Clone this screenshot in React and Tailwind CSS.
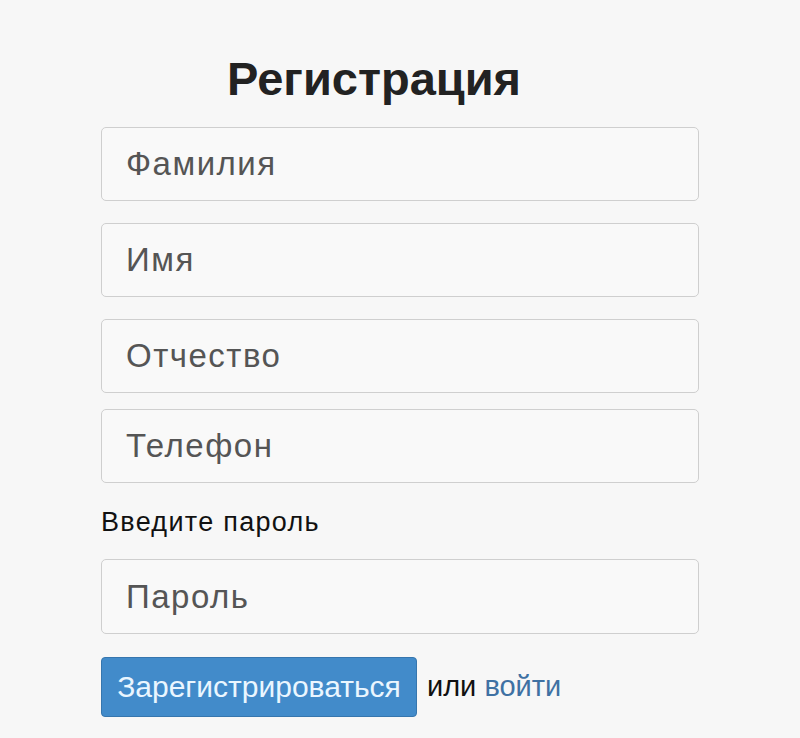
import { useState } from "react";

const fields = [
  { name: "lastName", placeholder: "Фамилия", mt: "mt-[25px]" },
  { name: "firstName", placeholder: "Имя", mt: "mt-[22px]" },
  { name: "middleName", placeholder: "Отчество", mt: "mt-[22px]" },
  { name: "phone", placeholder: "Телефон", mt: "mt-[16px]" },
];

function Field({ placeholder, value, onChange, type = "text", className = "" }) {
  return (
    <input
      type={type}
      value={value}
      onChange={onChange}
      placeholder={placeholder}
      className={
        "block w-full px-[24px] bg-[#f9f9f9] border border-[#cfcfcf] rounded-[5px] text-[33px] tracking-[1.5px] text-[#333] placeholder:text-[#555] outline-none " +
        className
      }
    />
  );
}

export default function App() {
  const [form, setForm] = useState({});
  const set = (key) => (e) => setForm({ ...form, [key]: e.target.value });

  return (
    <div
      className="w-[800px] h-[738px] bg-[#f7f7f7] overflow-hidden"
      style={{ fontFamily: '"Liberation Sans", Arial, sans-serif' }}
    >
      <div className="ml-[101px] w-[598px] pt-[55px]">
        <h1 className="flex justify-center pr-[52px] text-[47px] leading-none font-bold text-[#222]">
          Регистрация
        </h1>

        {fields.map((f) => (
          <Field
            key={f.name}
            placeholder={f.placeholder}
            value={form[f.name] || ""}
            onChange={set(f.name)}
            className={"h-[74px] " + f.mt}
          />
        ))}

        <label className="block mt-[26px] text-[27px] tracking-[1.3px] leading-none text-[#111]">
          Введите пароль
        </label>
        <Field
          type="password"
          placeholder="Пароль"
          value={form.password || ""}
          onChange={set("password")}
          className="h-[75px] mt-[23px]"
        />

        <div className="flex items-center mt-[23px]">
          <button className="w-[316px] h-[60px] bg-[#428bca] border border-[#3676ae] rounded-[4px] text-[30px] text-[#eaf6ff] leading-none">
            Зарегистрироваться
          </button>
          <span className="ml-[10px] text-[29px] text-[#111]">
            или{" "}
            <a href="#" className="text-[#3f71a3]">
              войти
            </a>
          </span>
        </div>
      </div>
    </div>
  );
}
